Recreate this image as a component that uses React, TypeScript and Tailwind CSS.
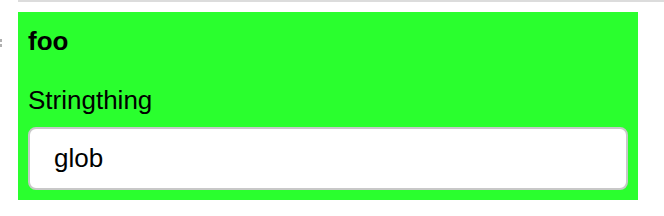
export default function App() {
  return (
    <div className="h-[216px] w-[664px] bg-white font-['Liberation_Sans',Arial,sans-serif] text-black">
      <div className="ml-[18px] h-[2px] bg-[#dcdcdc]" />
      <div className="mt-[10px] flex">
        {/* cut-off handle at the left edge */}
        <div className="relative w-[18px] shrink-0">
          <span className="absolute left-0 top-[27px] h-[3px] w-[2px] bg-[#b0b0b0]" />
          <span className="absolute left-0 top-[32px] h-[3px] w-[2px] bg-[#b0b0b0]" />
        </div>
        <div className="flex h-[188px] w-[620px] flex-col bg-[#2aff2e] px-[10px] pt-[14px]">
          <h2 className="text-[26px] font-bold leading-[30px]">foo</h2>
          <label className="mt-[29px] text-[26px] leading-[30px]">Stringthing</label>
          <input
            type="text"
            defaultValue="glob"
            className="mt-[12px] h-[63px] w-full rounded-[8px] border-2 border-[#c8c8c8] bg-white px-[24px] text-[26px] leading-[30px] text-black outline-none"
          />
        </div>
      </div>
    </div>
  );
}
